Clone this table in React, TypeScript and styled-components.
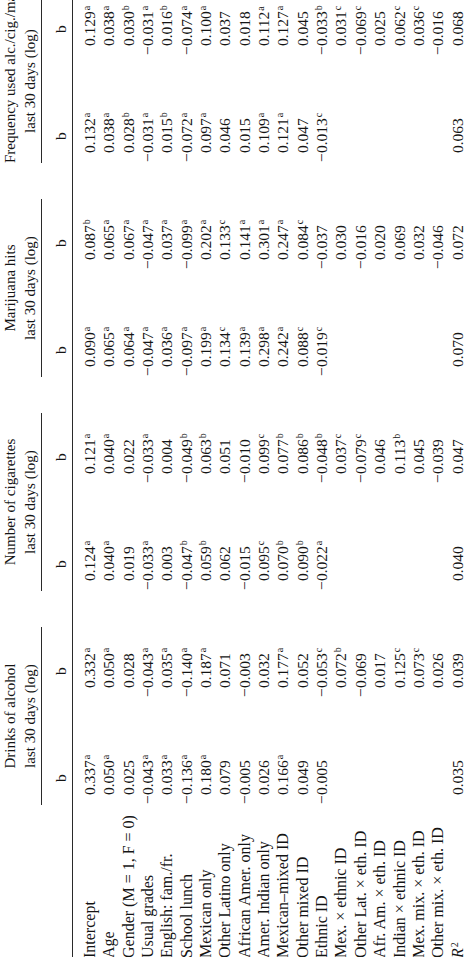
import React from 'react';
import styled, { createGlobalStyle } from 'styled-components';

const GlobalStyle = createGlobalStyle`
  html, body { margin: 0; padding: 0; background: #fff; }
  body {
    font-family: "Liberation Serif", "Times New Roman", serif;
    color: #141414;
  }
`;

const COLS = '147px repeat(8, 107px)';

const Frame = styled.div`
  width: 474px;
  height: 957px;
  overflow: hidden;
  background: #fff;
`;

// the table is printed sideways: build it upright, then turn it
const Sheet = styled.div`
  width: 957px;
  height: 474px;
  transform-origin: top left;
  transform: translateY(957px) rotate(-90deg);
  font-size: 15.5px;
`;

const Table = styled.div`
  margin-left: -1px;
  width: 1003px;
`;

const Grid = styled.div`
  display: grid;
  grid-template-columns: ${COLS};
`;

const HeadRow = styled(Grid)``;

const GroupHead = styled.div<{ $last?: boolean }>`
  grid-column: span 2;
  margin: ${({ $last }) => ($last ? '0 44px 0 6px' : '0 30px 0 6px')};
  text-align: center;
  font-size: 15px;
  line-height: 20px;
  white-space: nowrap;
  border-bottom: 1px solid #2a2a2a;
  padding-bottom: 1px;
`;

const SubHeadRow = styled(Grid)`
  border-bottom: 1px solid #2a2a2a;
`;

const BCell = styled.div`
  padding: 9px 0 1px 16px;
  line-height: 20px;

  span {
    display: inline-block;
    width: 34px;
    text-align: center;
  }
`;

const Body = styled.div`
  padding-top: 7px;
`;

const Row = styled(Grid)`
  line-height: 19.35px;
  white-space: nowrap;
`;

const Label = styled.div`
  text-align: left;
  font-size: 16px;
`;

const Cell = styled.div`
  padding-left: 7px;
`;

const Sign = styled.span`
  display: inline-block;
  width: 9px;
  text-align: left;
`;

const Sup = styled.sup`
  font-size: 10px;
  line-height: 0;
  vertical-align: 5px;
  margin-left: 1px;
`;

const Italic = styled.i`
  font-style: italic;
`;

const groups = [
  ['Drinks of alcohol', 'last 30 days (log)'],
  ['Number of cigarettes', 'last 30 days (log)'],
  ['Marijuana hits', 'last 30 days (log)'],
  ['Frequency used alc./cig./marijuana', 'last 30 days (log)'],
];

const rows: [string, string[]][] = [
  ['Intercept', ['0.337a', '0.332a', '0.124a', '0.121a', '0.090a', '0.087b', '0.132a', '0.129a']],
  ['Age', ['0.050a', '0.050a', '0.040a', '0.040a', '0.065a', '0.065a', '0.038a', '0.038a']],
  ['Gender (M = 1, F = 0)', ['0.025', '0.028', '0.019', '0.022', '0.064a', '0.067a', '0.028b', '0.030b']],
  ['Usual grades', ['-0.043a', '-0.043a', '-0.033a', '-0.033a', '-0.047a', '-0.047a', '-0.031a', '-0.031a']],
  ['English: fam./fr.', ['0.033a', '0.035a', '0.003', '0.004', '0.036a', '0.037a', '0.015b', '0.016b']],
  ['School lunch', ['-0.136a', '-0.140a', '-0.047b', '-0.049b', '-0.097a', '-0.099a', '-0.072a', '-0.074a']],
  ['Mexican only', ['0.180a', '0.187a', '0.059b', '0.063b', '0.199a', '0.202a', '0.097a', '0.100a']],
  ['Other Latino only', ['0.079', '0.071', '0.062', '0.051', '0.134c', '0.133c', '0.046', '0.037']],
  ['African Amer. only', ['-0.005', '-0.003', '-0.015', '-0.010', '0.139a', '0.141a', '0.015', '0.018']],
  ['Amer. Indian only', ['0.026', '0.032', '0.095c', '0.099c', '0.298a', '0.301a', '0.109a', '0.112a']],
  ['Mexican\u2013mixed ID', ['0.166a', '0.177a', '0.070b', '0.077b', '0.242a', '0.247a', '0.121a', '0.127a']],
  ['Other mixed ID', ['0.049', '0.052', '0.090b', '0.086b', '0.088c', '0.084c', '0.047', '0.045']],
  ['Ethnic ID', ['-0.005', '-0.053c', '-0.022a', '-0.048b', '-0.019c', '-0.037', '-0.013c', '-0.033b']],
  ['Mex. \u00d7 ethnic ID', ['', '0.072b', '', '0.037c', '', '0.030', '', '0.031c']],
  ['Other Lat. \u00d7 eth. ID', ['', '-0.069', '', '-0.079c', '', '-0.016', '', '-0.069c']],
  ['Afr. Am. \u00d7 eth. ID', ['', '0.017', '', '0.046', '', '0.020', '', '0.025']],
  ['Indian \u00d7 ethnic ID', ['', '0.125c', '', '0.113b', '', '0.069', '', '0.062c']],
  ['Mex. mix. \u00d7 eth. ID', ['', '0.073c', '', '0.045', '', '0.032', '', '0.036c']],
  ['Other mix. \u00d7 eth. ID', ['', '0.026', '', '-0.039', '', '-0.046', '', '-0.016']],
  ['R2', ['0.035', '0.039', '0.040', '0.047', '0.070', '0.072', '0.063', '0.068']],
];

function Value({ v }: { v: string }) {
  if (!v) return <Cell />;
  const neg = v.startsWith('-');
  const body = neg ? v.slice(1) : v;
  const m = body.match(/^([\d.]+)([abc]?)$/);
  const num = m ? m[1] : body;
  const mark = m ? m[2] : '';
  return (
    <Cell>
      <Sign>{neg ? '\u2212' : ''}</Sign>
      {num}
      {mark && <Sup>{mark}</Sup>}
    </Cell>
  );
}

export default function App() {
  return (
    <Frame>
      <GlobalStyle />
      <Sheet>
        <Table>
          <HeadRow>
            <div />
            {groups.map(([a, b], i) => (
              <GroupHead key={a} $last={i === groups.length - 1}>
                <div>{a}</div>
                <div>{b}</div>
              </GroupHead>
            ))}
          </HeadRow>
          <SubHeadRow>
            <div />
            {Array.from({ length: 8 }).map((_, i) => (
              <BCell key={i}>
                <span>b</span>
              </BCell>
            ))}
          </SubHeadRow>
          <Body>
            {rows.map(([label, vals]) => (
              <Row key={label}>
                <Label>
                  {label === 'R2' ? (
                    <>
                      <Italic>R</Italic>
                      <Sup>2</Sup>
                    </>
                  ) : (
                    label
                  )}
                </Label>
                {vals.map((v, i) => (
                  <Value key={i} v={v} />
                ))}
              </Row>
            ))}
          </Body>
        </Table>
      </Sheet>
    </Frame>
  );
}
